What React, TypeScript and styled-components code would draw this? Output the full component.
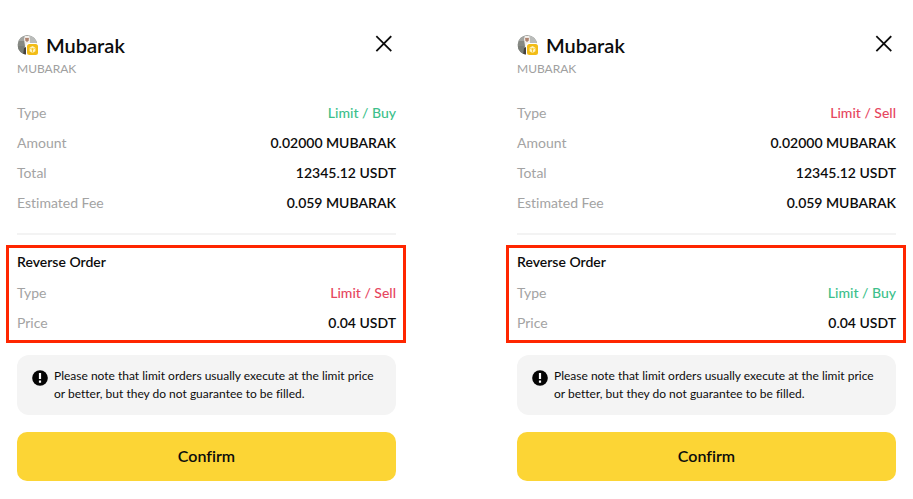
import React from 'react';
import styled, { createGlobalStyle } from 'styled-components';

type Side = 'Buy' | 'Sell';

const GlobalStyle = createGlobalStyle`
  * { box-sizing: border-box; }
  body {
    margin: 0;
    background: #fff;
    color: #0c0c0c;
    font-family: Lato, "Open Sans", sans-serif;
    font-size: 14px;
    line-height: 20px;
    font-variant-ligatures: none;
  }
`;

const Page = styled.main`
  display: grid;
  grid-template-columns: 1fr 1fr;
  gap: 121px;
  padding: 32px 17px 18px;
`;

const Card = styled.section`
  display: flex;
  flex-direction: column;
  min-width: 0;
`;

const Header = styled.header`
  display: flex;
  justify-content: space-between;
  align-items: flex-start;
`;

const TitleLine = styled.div`
  display: flex;
  align-items: center;
  gap: 8px;
`;

const Title = styled.h1`
  margin: 0;
  font-size: 20px;
  line-height: 26px;
  font-weight: 600;
`;

const Symbol = styled.div`
  margin-top: 2px;
  font-size: 12px;
  line-height: 18px;
  color: #a0a0a0;
`;

const CloseButton = styled.button`
  display: flex;
  padding: 0;
  margin-top: 2px;
  border: 0;
  background: none;
  color: #0c0c0c;
  cursor: pointer;
`;

const Details = styled.dl`
  display: flex;
  flex-direction: column;
  gap: 10px;
  margin: 0;
`;

const OrderDetails = styled(Details)`
  margin-top: 25px;
  padding-bottom: 20px;
  border-bottom: 2px solid #f3f3f3;
`;

const Row = styled.div`
  display: flex;
  justify-content: space-between;
`;

const Label = styled.dt`
  color: #a3a3a3;
`;

const Value = styled.dd<{ $side?: Side }>`
  margin: 0;
  font-weight: ${(p) => (p.$side ? 500 : 600)};
  color: ${(p) => (p.$side === 'Buy' ? '#3dbf8b' : p.$side === 'Sell' ? '#e6475f' : 'inherit')};
`;

const Highlight = styled.section`
  display: flex;
  flex-direction: column;
  gap: 11px;
  margin: 10px -10px 0 -11px;
  padding: 4px 7px 7px 8px;
  border: 3px solid #ff2600;
`;

const SectionTitle = styled.h2`
  margin: 0;
  font-size: 14px;
  line-height: 20px;
  font-weight: 600;
`;

const Note = styled.div`
  display: flex;
  gap: 6px;
  margin-top: 12px;
  padding: 12px 16px 12px 15px;
  border-radius: 12px;
  background: #f4f4f4;
  font-size: 12px;
  line-height: 18px;
`;

const NoteText = styled.p`
  margin: 0;
`;

const AlertSvg = styled.svg`
  flex: none;
  margin-top: 3px;
`;

const ConfirmButton = styled.button`
  height: 49px;
  margin-top: 17px;
  padding: 0 16px 2px;
  border: 0;
  border-radius: 10px;
  background: #fcd535;
  color: #0c0c0c;
  font: 600 16px/24px Lato, "Open Sans", sans-serif;
  font-variant-ligatures: none;
  cursor: pointer;
`;

function TokenIcon({ id }: { id: string }) {
  return (
    <svg width="21" height="21" viewBox="0 0 21 21" aria-hidden="true">
      <defs>
        <clipPath id={id}>
          <circle cx="10.400" cy="10" r="9.800" />
        </clipPath>
      </defs>
      <g clipPath={`url(#${id})`}>
        <rect width="21" height="21" fill="#868983" />
        <path d="M0 0h10v6H0z" fill="#a3a5a2" />
        <path d="M12 0h9v12h-9z" fill="#babcba" />
        <path d="M0 11h7v10H0z" fill="#7b7f79" />
        <path d="M7 4l1-3h4l1 3v5l-1 2v9H7l1-9z" fill="#f1eeea" />
        <path d="M8 2.500h4l-.3 3-1.200 1.300h-1L8.400 5.500z" fill="#af8470" />
        <path d="M7.800 1.500h4.500v1.300H7.800z" fill="#f7f5f2" />
        <path d="M7 13l2-1v9H6z" fill="#45413c" />
      </g>
      <rect x="9" y="8" width="13" height="14" rx="3" fill="#fff" />
      <rect x="10" y="9" width="11" height="11" rx="2.500" fill="#f2bc16" />
      <path d="M15.500 11l2.900 1.700v3.500l-2.900 1.800-2.900-1.800v-3.500z" fill="#fff3bd" />
      <path d="M15.500 13v4.500M13.300 13.300l2.200 1.300 2.200-1.300" stroke="#f2bc16" strokeWidth=".8" fill="none" />
    </svg>
  );
}

function CloseIcon() {
  return (
    <svg width="24" height="20" viewBox="0 0 24 20" aria-hidden="true">
      <path d="M5 2.800l13.600 13.600M18.600 2.800L5 16.400" stroke="currentColor" strokeWidth="1.800" strokeLinecap="square" />
    </svg>
  );
}

function AlertIcon() {
  return (
    <AlertSvg width="16" height="16" viewBox="0 0 16 16" aria-hidden="true">
      <circle cx="8" cy="8" r="7.800" fill="#050505" />
      <path d="M6.900 3h2.200v6H6.900zM6.900 10.600h2.200v2.200H6.900z" fill="#fff" />
    </AlertSvg>
  );
}

function OrderCard({ side, reverse }: { side: Side; reverse: Side }) {
  return (
    <Card>
      <Header>
        <div>
          <TitleLine>
            <TokenIcon id={`token-${side}`} />
            <Title>Mubarak</Title>
          </TitleLine>
          <Symbol>MUBARAK</Symbol>
        </div>
        <CloseButton type="button" aria-label="Close">
          <CloseIcon />
        </CloseButton>
      </Header>
      <OrderDetails>
        <Row><Label>Type</Label><Value $side={side}>Limit / {side}</Value></Row>
        <Row><Label>Amount</Label><Value>0.02000 MUBARAK</Value></Row>
        <Row><Label>Total</Label><Value>12345.12 USDT</Value></Row>
        <Row><Label>Estimated Fee</Label><Value>0.059 MUBARAK</Value></Row>
      </OrderDetails>
      <Highlight>
        <SectionTitle>Reverse Order</SectionTitle>
        <Details>
          <Row><Label>Type</Label><Value $side={reverse}>Limit / {reverse}</Value></Row>
          <Row><Label>Price</Label><Value>0.04 USDT</Value></Row>
        </Details>
      </Highlight>
      <Note>
        <AlertIcon />
        <NoteText>
          Please note that limit orders usually execute at the limit price or better, but they do not guarantee to be filled.
        </NoteText>
      </Note>
      <ConfirmButton type="button">Confirm</ConfirmButton>
    </Card>
  );
}

export default function App() {
  return (
    <>
      <GlobalStyle />
      <Page>
        <OrderCard side="Buy" reverse="Sell" />
        <OrderCard side="Sell" reverse="Buy" />
      </Page>
    </>
  );
}
